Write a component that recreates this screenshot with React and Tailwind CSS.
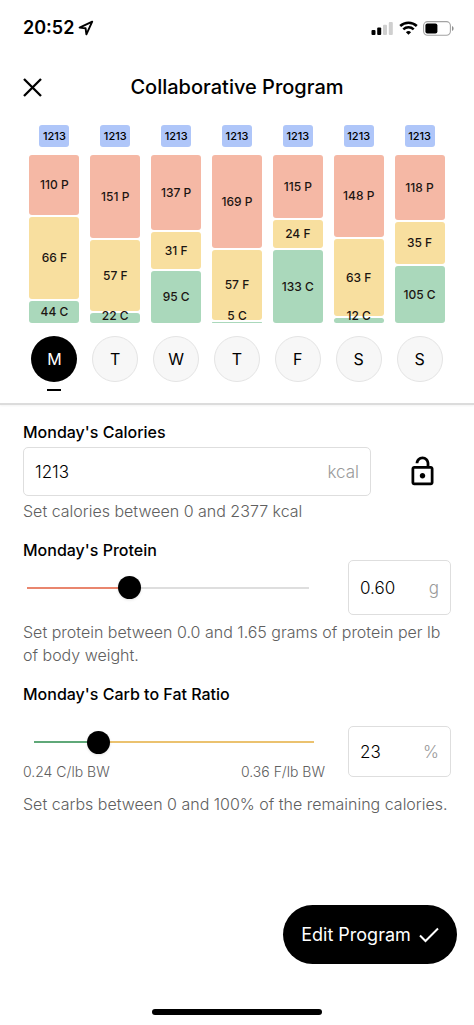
import React, { useState } from "react";
import { MdOutlineLockOpen } from "react-icons/md";

const days = [
  { name: "Monday", letter: "M", calories: 1213, protein: 110, fat: 66, carbs: 44, bars: [60, 82, 22] },
  { name: "Tuesday", letter: "T", calories: 1213, protein: 151, fat: 57, carbs: 22, bars: [83, 71, 10] },
  { name: "Wednesday", letter: "W", calories: 1213, protein: 137, fat: 31, carbs: 95, bars: [75, 37, 52] },
  { name: "Thursday", letter: "T", calories: 1213, protein: 169, fat: 57, carbs: 5, bars: [93, 70, 1] },
  { name: "Friday", letter: "F", calories: 1213, protein: 115, fat: 24, carbs: 133, bars: [63, 28, 73] },
  { name: "Saturday", letter: "S", calories: 1213, protein: 148, fat: 63, carbs: 12, bars: [82, 77, 5] },
  { name: "Sunday", letter: "S", calories: 1213, protein: 118, fat: 35, carbs: 105, bars: [65, 42, 57] },
];

const StatusBar = () => (
  <div className="flex items-center justify-between pt-4 pl-[23px] pr-5">
    <div className="flex items-center gap-1">
      <span className="text-lg leading-6 font-semibold">20:52</span>
      <svg width="16" height="16" viewBox="0 0 16 16" fill="none" stroke="black" strokeWidth="1.9" strokeLinejoin="round">
        <path d="M14.2 1.6 1.6 7.6l6 .7.8 6z" />
      </svg>
    </div>
    <div className="flex items-center gap-[5px]">
      <svg width="23" height="14" viewBox="0 0 23 14">
        <rect x="0.5" y="9" width="4" height="5" rx="1" />
        <rect x="6.2" y="6.5" width="4" height="7.5" rx="1" />
        <rect x="12" y="3.8" width="4" height="10.2" rx="1" fill="#cfcfcf" />
        <rect x="17.8" y="1" width="4" height="13" rx="1" fill="#cfcfcf" />
      </svg>
      <svg width="19" height="14" viewBox="0 0 19 14" fill="none" stroke="black" strokeWidth="2.5">
        <path d="M1.2 5a12 12 0 0 1 16.6 0" />
        <path d="M4.3 8.3a7.500 7.500 0 0 1 10.400 0" />
        <path d="M9.500 13.800 6.900 11.200a3.800 3.800 0 0 1 5.200 0z" fill="black" stroke="none" />
      </svg>
      <svg width="31" height="15" viewBox="0 0 31 15">
        <rect x="0.6" y="0.6" width="26.8" height="13.6" rx="4" fill="none" stroke="#a3a3a3" strokeWidth="1.1" />
        <rect x="2.4" y="2.4" width="12" height="10" rx="2" />
        <path d="M29 5v5c1-.4 1.600-1.400 1.600-2.500S30 5.400 29 5z" fill="#8f8f8f" />
      </svg>
    </div>
  </div>
);

const DayBars = ({ day }) => (
  <div className="flex flex-col items-center">
    <span className="w-[30px] h-[22px] rounded-[3px] bg-[#afc6f9] text-[11px] font-medium flex items-center justify-center">
      {day.calories}
    </span>
    <div className="mt-2 w-[50px] flex flex-col gap-[2px] text-xs leading-[14px] font-medium text-[#1c1512]">
      <div className="rounded-[3px] bg-[#f5b8a5] flex items-center justify-center" style={{ height: day.bars[0] }}>
        {day.protein} P
      </div>
      <div className="rounded-[3px] bg-[#f8df9f] flex items-center justify-center" style={{ height: day.bars[1] }}>
        {day.fat} F
      </div>
      {/* short bars keep the label on their bottom edge */}
      <div
        className={`rounded-[3px] bg-[#aad8bb] flex justify-center ${day.bars[2] < 14 ? "items-end" : "items-center"}`}
        style={{ height: day.bars[2] }}
      >
        {day.carbs} C
      </div>
    </div>
  </div>
);

const Slider = ({ value, max, step, onChange, label, from, to }) => {
  const percent = (value / max) * 100;
  return (
    <input
      type="range"
      aria-label={label}
      min="0"
      max={max}
      step={step}
      value={value}
      onChange={(e) => onChange(e.target.value)}
      className="block w-full h-6 appearance-none bg-no-repeat bg-center bg-size-[calc(100%-22px)_2px] cursor-pointer [&::-webkit-slider-thumb]:appearance-none [&::-webkit-slider-thumb]:w-[23px] [&::-webkit-slider-thumb]:h-[23px] [&::-webkit-slider-thumb]:rounded-full [&::-webkit-slider-thumb]:bg-black [&::-webkit-slider-thumb]:shadow"
      style={{ backgroundImage: `linear-gradient(to right, ${from} ${percent}%, ${to} ${percent}%)` }}
    />
  );
};

const ValueBox = ({ id, value, unit, onChange, className }) => (
  <div className={`flex items-center px-[11px] border border-[#dedede] rounded-[5px] text-[17px] leading-6 ${className}`}>
    <input
      id={id}
      value={value}
      onChange={(e) => onChange(e.target.value)}
      className="min-w-0 flex-1 text-black outline-none"
    />
    <span className="font-light text-[#9a9a9a]">{unit}</span>
  </div>
);

const App = () => {
  const [selected, setSelected] = useState(0);
  const [calories, setCalories] = useState("1213");
  const [protein, setProtein] = useState("0.60");
  const [ratio, setRatio] = useState("23");
  const dayName = days[selected].name;

  return (
    <div className="min-h-screen flex flex-col bg-white text-black font-['Inter',sans-serif]">
      <StatusBar />

      <header className="mt-[31px] px-[23px] grid grid-cols-[1fr_auto_1fr] items-center">
        <button type="button" aria-label="Close" className="w-5 h-5">
          <svg width="19" height="19" viewBox="0 0 19 19" stroke="black" strokeWidth="2.3">
            <path d="M1 1l17 17M18 1 1 18" />
          </svg>
        </button>
        <h1 className="text-xl leading-8 font-medium">Collaborative Program</h1>
      </header>

      <section className="mt-[22px] px-6 pb-3 border-b-2 border-[#dcdcdc] shadow-xs">
        <div className="grid grid-cols-7">
          {days.map((day) => (
            <DayBars key={day.name} day={day} />
          ))}
        </div>
        <div className="mt-[13px] grid grid-cols-7">
          {days.map((day, i) => (
            <div key={day.name} className="flex flex-col items-center gap-[7px]">
              <button
                type="button"
                aria-label={day.name}
                onClick={() => setSelected(i)}
                className={`w-[46px] h-[46px] rounded-full text-base ${
                  i === selected ? "bg-black text-white" : "bg-[#f7f7f7] border border-[#e4e4e4]"
                }`}
              >
                {day.letter}
              </button>
              {i === selected && <span className="w-[14px] h-[2px] bg-black" />}
            </div>
          ))}
        </div>
      </section>

      <main className="px-[23px] text-base leading-[23px] font-light text-[#606060]">
        {/* Calories */}
        <section className="pt-4">
          <label htmlFor="calories" className="block font-medium text-black">
            {dayName}'s Calories
          </label>
          <div className="mt-[3px] flex items-center justify-between">
            <ValueBox
              id="calories"
              value={calories}
              unit="kcal"
              onChange={setCalories}
              className="w-[348px] h-[49px]"
            />
            <button type="button" aria-label="Unlock calories" className="mr-3 text-black">
              <MdOutlineLockOpen size={33} />
            </button>
          </div>
          <p className="mt-1">Set calories between 0 and 2377 kcal</p>
        </section>

        {/* Protein */}
        <section className="mt-4">
          <label htmlFor="protein" className="block font-medium text-black">
            {dayName}'s Protein
          </label>
          <div className="-mt-[2px] flex items-center gap-[23px]">
            <div className="flex-1 -ml-[7px] mr-[5px]">
              <Slider
                label="Protein"
                value={protein}
                max={1.65}
                step={0.01}
                onChange={setProtein}
                from="#e9866e"
                to="#dedede"
              />
            </div>
            <ValueBox id="protein" value={protein} unit="g" onChange={setProtein} className="w-[103px] h-[55px]" />
          </div>
          <p className="mt-[6px]">
            Set protein between 0.0 and 1.65 grams of protein per lb of body weight.
          </p>
        </section>

        {/* Carb to fat ratio */}
        <section className="mt-4">
          <label htmlFor="ratio" className="block font-medium text-black">
            {dayName}'s Carb to Fat Ratio
          </label>
          <div className="mt-5 flex items-start gap-[23px]">
            <div className="flex-1 pt-1">
              <Slider
                label="Carb to fat ratio"
                value={ratio}
                max={100}
                step={1}
                onChange={setRatio}
                from="#5fa878"
                to="#ebc26f"
              />
              <div className="mt-[6px] flex justify-between text-sm leading-[23px]">
                <span>0.24 C/lb BW</span>
                <span>0.36 F/lb BW</span>
              </div>
            </div>
            <ValueBox id="ratio" value={ratio} unit="%" onChange={setRatio} className="w-[103px] h-[51px]" />
          </div>
          <p className="mt-[10px]">Set carbs between 0 and 100% of the remaining calories.</p>
        </section>
      </main>

      <footer className="mt-auto pt-8 pb-[10px] flex flex-col">
        <button
          type="button"
          className="self-end mr-[17px] h-[59px] w-[174px] rounded-full bg-black text-white text-lg flex items-center justify-center gap-2 whitespace-nowrap"
        >
          Edit Program
          <svg width="20" height="16" viewBox="0 0 20 16" fill="none" stroke="white" strokeWidth="2" className="shrink-0">
            <path d="M1 8.500 6.500 14 19 1.500" />
          </svg>
        </button>
        <div className="mt-[45px] self-center w-[170px] h-[6px] rounded-full bg-black" />
      </footer>
    </div>
  );
};

export default App;
